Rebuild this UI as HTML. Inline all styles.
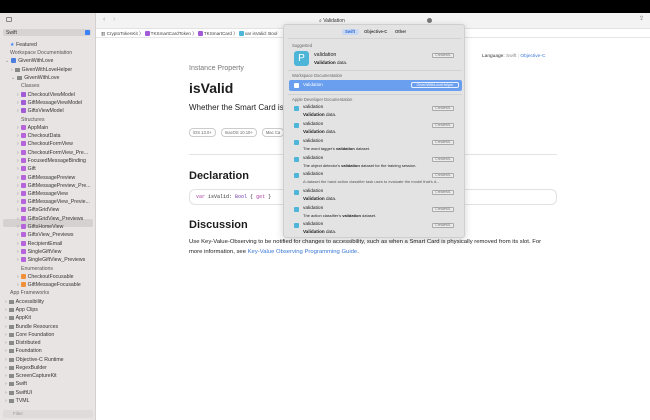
<!DOCTYPE html>
<html><head><meta charset="utf-8"><style>
*{margin:0;padding:0;box-sizing:border-box}
body{width:650px;height:420px;overflow:hidden;position:relative;font-family:"Liberation Sans",sans-serif;background:#fff;color:#222}
.a{position:absolute;white-space:nowrap}
#top{left:0;top:0;width:650px;height:13px;background:#000}
#side{left:0;top:13px;width:96px;height:407px;background:#e9e4e4;border-right:1px solid #d5d0d0}
.r{position:absolute;font-size:5.2px;color:#333;white-space:nowrap;line-height:7px}
.ic{display:inline-block;width:5px;height:5px;border-radius:1px;vertical-align:-1px;margin-right:2px}
.s{background:#b565d9}.c{background:#a25ad6}.e{background:#f0903a}.fw{background:#8a8a8a;border-radius:0;width:5px;height:4px}
.ch{color:#888;margin-right:2px;font-size:5px}
.h{color:#555}
#tb{left:96px;top:13px;width:554px;height:16px;background:#f3f3f3;border-bottom:1px solid #e2e2e2}
#bc{left:96px;top:29px;width:554px;height:9px;background:#fff;border-bottom:1px solid #e6e6e6;font-size:4.6px;color:#444;padding:2px 0 0 5px}
.pill{display:inline-block;border:1px solid #ccc;border-radius:4px;font-size:4.2px;color:#666;padding:1px 3px;margin-right:5px}
#pop{left:283px;top:24px;width:182px;height:214px;background:#e3e3e3;border:1px solid #cfcfcf;border-radius:3px;box-shadow:0 2px 8px rgba(0,0,0,.18)}
.pi{position:absolute;left:10px;font-size:4.6px;color:#222;white-space:nowrap}
.t{font-size:4.8px}
.pi b{font-weight:bold}
.pic{position:absolute;left:10px;width:5px;height:5px;background:#4db5d8;border-radius:1px}
.cm{position:absolute;left:148px;width:22px;height:5px;border:1px solid #aaa;border-radius:1px;font-size:3.6px;color:#777;text-align:center;line-height:3.5px;background:#ececec}
.sec{position:absolute;left:8px;font-size:4.2px;color:#666}
</style></head><body>
<div class="a" id="top"></div>
<div class="a" id="side">
<div class="a" style="left:6px;top:4px;width:6px;height:5px;border:1px solid #888;border-radius:1px"></div>
<div class="a" style="left:3px;top:16px;width:88px;height:7px;background:#d8d3d3;border-radius:2px;font-size:5px;padding:1px 3px;color:#333">Swift<span style="position:absolute;right:1px;top:1px;width:5px;height:5px;background:#3b82f6;border-radius:1px"></span></div>
</div>
<div class="a" style="left:3px;top:219px;width:90px;height:8px;background:#d6d1d1;border-radius:2px"></div>
<div class="a" style="left:3px;top:410px;width:90px;height:8px;background:#e0dbdb;border-radius:2px;font-size:4.5px;color:#999;padding:1px 10px">Filter</div>
<div id="sb">
<div class="r" style="left:10px;top:42px"><span style="color:#3b82f6">★</span> Featured</div>
<div class="r h" style="left:10px;top:50px">Workspace Documentation</div>
<div class="r" style="left:5px;top:58px"><span class="ch">⌄</span><span class="ic" style="background:#4a7fe0"></span>GivenWithLove</div>
<div class="r" style="left:11px;top:67px"><span class="ch">›</span><span class="ic fw"></span>GivenWithLoveHelper</div>
<div class="r" style="left:11px;top:75px"><span class="ch">⌄</span><span class="ic fw"></span>GivenWithLove</div>
<div class="r h" style="left:21px;top:83px">Classes</div>
<div class="r" style="left:17px;top:92px"><span class="ch">›</span><span class="ic c"></span>CheckoutViewModel</div>
<div class="r" style="left:17px;top:100px"><span class="ch">›</span><span class="ic c"></span>GiftMessageViewModel</div>
<div class="r" style="left:17px;top:108px"><span class="ch">›</span><span class="ic c"></span>GiftsViewModel</div>
<div class="r h" style="left:21px;top:117px">Structures</div>
<div class="r" style="left:17px;top:125px"><span class="ch">›</span><span class="ic s"></span>AppMain</div>
<div class="r" style="left:17px;top:133px"><span class="ch">›</span><span class="ic s"></span>CheckoutData</div>
<div class="r" style="left:17px;top:141px"><span class="ch">›</span><span class="ic s"></span>CheckoutFormView</div>
<div class="r" style="left:17px;top:150px"><span class="ch">›</span><span class="ic s"></span>CheckoutFormView_Pre...</div>
<div class="r" style="left:17px;top:158px"><span class="ch">›</span><span class="ic s"></span>FocusedMessageBinding</div>
<div class="r" style="left:17px;top:166px"><span class="ch">›</span><span class="ic s"></span>Gift</div>
<div class="r" style="left:17px;top:175px"><span class="ch">›</span><span class="ic s"></span>GiftMessagePreview</div>
<div class="r" style="left:17px;top:183px"><span class="ch">›</span><span class="ic s"></span>GiftMessagePreview_Pre...</div>
<div class="r" style="left:17px;top:191px"><span class="ch">›</span><span class="ic s"></span>GiftMessageView</div>
<div class="r" style="left:17px;top:199px"><span class="ch">›</span><span class="ic s"></span>GiftMessageView_Previe...</div>
<div class="r" style="left:17px;top:207px"><span class="ch">›</span><span class="ic s"></span>GiftsGridView</div>
<div class="r" style="left:17px;top:216px"><span class="ch">›</span><span class="ic s"></span>GiftsGridView_Previews</div>
<div class="r" style="left:17px;top:224px"><span class="ch">›</span><span class="ic s"></span>GiftsHomeView</div>
<div class="r" style="left:17px;top:232px"><span class="ch">›</span><span class="ic s"></span>GiftsView_Previews</div>
<div class="r" style="left:17px;top:241px"><span class="ch">›</span><span class="ic s"></span>RecipientEmail</div>
<div class="r" style="left:17px;top:249px"><span class="ch">›</span><span class="ic s"></span>SingleGiftView</div>
<div class="r" style="left:17px;top:257px"><span class="ch">›</span><span class="ic s"></span>SingleGiftView_Previews</div>
<div class="r h" style="left:21px;top:266px">Enumerations</div>
<div class="r" style="left:17px;top:274px"><span class="ch">›</span><span class="ic e"></span>CheckoutFocusable</div>
<div class="r" style="left:17px;top:282px"><span class="ch">›</span><span class="ic e"></span>GiftMessageFocusable</div>
<div class="r h" style="left:10px;top:290px">App Frameworks</div>
<div class="r" style="left:5px;top:299px"><span class="ch">›</span><span class="ic fw"></span>Accessibility</div>
<div class="r" style="left:5px;top:307px"><span class="ch">›</span><span class="ic fw"></span>App Clips</div>
<div class="r" style="left:5px;top:315px"><span class="ch">›</span><span class="ic fw"></span>AppKit</div>
<div class="r" style="left:5px;top:324px"><span class="ch">›</span><span class="ic fw"></span>Bundle Resources</div>
<div class="r" style="left:5px;top:332px"><span class="ch">›</span><span class="ic fw"></span>Core Foundation</div>
<div class="r" style="left:5px;top:340px"><span class="ch">›</span><span class="ic fw"></span>Distributed</div>
<div class="r" style="left:5px;top:348px"><span class="ch">›</span><span class="ic fw"></span>Foundation</div>
<div class="r" style="left:5px;top:357px"><span class="ch">›</span><span class="ic fw"></span>Objective-C Runtime</div>
<div class="r" style="left:5px;top:365px"><span class="ch">›</span><span class="ic fw"></span>RegexBuilder</div>
<div class="r" style="left:5px;top:373px"><span class="ch">›</span><span class="ic fw"></span>ScreenCaptureKit</div>
<div class="r" style="left:5px;top:381px"><span class="ch">›</span><span class="ic fw"></span>Swift</div>
<div class="r" style="left:5px;top:390px"><span class="ch">›</span><span class="ic fw"></span>SwiftUI</div>
<div class="r" style="left:5px;top:398px"><span class="ch">›</span><span class="ic fw"></span>TVML</div>
</div>

<div class="a" id="tb"><span class="a" style="left:7px;top:3px;font-size:7px;color:#999">‹</span><span class="a" style="left:17px;top:3px;font-size:7px;color:#bbb">›</span><span class="a" style="right:6px;top:2px;font-size:6px;color:#666">⇪</span></div>
<div class="a" id="bc">▥ CryptoTokenKit 〉<span class="ic c" style="margin:0 1px"></span>TKSmartCardToken 〉<span class="ic c" style="margin:0 1px"></span>TKSmartCard 〉<span class="ic" style="background:#4db5d8;margin:0 1px"></span>var isValid: Bool</div>

<div class="a" style="left:189px;top:65px;font-size:7px;color:#777">Instance Property</div>
<div class="a" style="left:189px;top:80px;font-size:14px;font-weight:bold;color:#1d1d1f">isValid</div>
<div class="a" style="left:189px;top:103px;font-size:8px;color:#1d1d1f">Whether the Smart Card is</div>
<div class="a" style="left:189px;top:121px"><span class="pill">iOS 13.0+</span><span class="pill">macOS 10.10+</span><span class="pill">Mac Ca</span></div>
<div class="a" style="left:482px;top:54px;font-size:4.8px;color:#333">Language: <span style="color:#888">Swift</span> <span style="color:#ccc">|</span> <span style="color:#3a78d6">Objective-C</span></div>
<div class="a" style="left:189px;top:154px;width:368px;height:1px;background:#e3e3e3"></div>
<div class="a" style="left:189px;top:170px;font-size:11px;font-weight:bold;color:#1d1d1f">Declaration</div>
<div class="a" style="left:189px;top:189px;width:368px;height:16px;border:1px solid #e2e2e2;border-radius:6px;font-family:'Liberation Mono',monospace;font-size:5px;padding:4px 6px;color:#333"><span style="color:#ad3da4">var</span> isValid: <span style="color:#703daa">Bool</span> { <span style="color:#ad3da4">get</span> }</div>
<div class="a" style="left:189px;top:219px;font-size:11px;font-weight:bold;color:#1d1d1f">Discussion</div>
<div class="a" style="left:189px;top:238px;font-size:5.9px;color:#222;line-height:9.5px">Use Key-Value-Observing to be notified for changes to accessibility, such as when a Smart Card is physically removed from its slot. For<br>more information, see <span style="color:#3a78d6">Key-Value Observing Programming Guide</span>.</div>

<div class="a" style="left:313px;top:16px;width:122px;height:9px;font-size:5px;color:#333;padding:2px 6px">⌕ Validation<span style="position:absolute;right:3px;top:2px;width:5px;height:5px;border-radius:50%;background:#777"></span></div>

<div class="a" id="pop">
<div class="a" style="left:58px;top:4px;width:17px;height:6px;background:#c9d9f3;border-radius:2px"></div>
<div class="a" style="left:61px;top:4px;font-size:4.2px;color:#2f6bd2;font-weight:bold">Swift</div>
<div class="a" style="left:80px;top:4px;font-size:4.2px;color:#444;font-weight:bold">Objective-C</div>
<div class="a" style="left:111px;top:4px;font-size:4.2px;color:#444;font-weight:bold">Other</div>
<div class="a" style="left:4px;top:13px;width:174px;height:1px;background:#d2d2d2"></div>
<div class="sec" style="top:18px">Suggested</div>
<div class="a" style="left:10px;top:26px;width:15px;height:15px;background:#4db5d8;border-radius:3px;color:#fff;font-size:10px;text-align:center;line-height:15px">P</div>
<div class="pi" style="left:30px;top:27px;font-size:5.3px">validation</div>
<div class="pi" style="left:30px;top:35px"><b>Validation</b> data.</div>
<div class="cm" style="top:28px">CreateML</div>
<div class="a" style="left:4px;top:45px;width:174px;height:1px;background:#d2d2d2"></div>
<div class="sec" style="top:48px">Workspace Documentation</div>
<div class="a" style="left:5px;top:55px;width:173px;height:11px;background:#6a9ff0;border-radius:2px"></div>
<div class="a" style="left:10px;top:58px;width:5px;height:5px;background:#fff;border-radius:1px"></div>
<div class="pi" style="left:19px;top:57px;color:#fff">Validation</div>
<div class="a" style="left:127px;top:57px;width:48px;height:6px;border:1px solid #e8f0ff;border-radius:2px;font-size:3.8px;color:#fff;text-align:center;line-height:4px">GivenWithLoveHelper</div>
<div class="a" style="left:4px;top:69px;width:174px;height:1px;background:#d2d2d2"></div>
<div class="sec" style="top:72px">Apple Developer Documentation</div>
<div class="pic" style="top:81px"></div><div class="pi t" style="left:19px;top:80px">validation</div><div class="pi" style="left:19px;top:87px"><b>Validation</b> data.</div><div class="cm" style="top:81px">CreateML</div>
<div class="pic" style="top:98px"></div><div class="pi t" style="left:19px;top:97px">validation</div><div class="pi" style="left:19px;top:104px"><b>Validation</b> data.</div><div class="cm" style="top:98px">CreateML</div>
<div class="pic" style="top:115px"></div><div class="pi t" style="left:19px;top:114px">validation</div><div class="pi" style="left:19px;top:121px;font-size:4px">The word tagger's <b>validation</b> dataset.</div><div class="cm" style="top:115px">CreateML</div>
<div class="pic" style="top:132px"></div><div class="pi t" style="left:19px;top:131px">validation</div><div class="pi" style="left:19px;top:138px;font-size:4px">The object detector's <b>validation</b> dataset for the training session.</div><div class="cm" style="top:132px">CreateML</div>
<div class="pic" style="top:148px"></div><div class="pi t" style="left:19px;top:147px">validation</div><div class="pi" style="left:19px;top:154px;font-size:4px;color:#555">A dataset the hand action classifier task uses to evaluate the model that's d...</div><div class="cm" style="top:148px">CreateML</div>
<div class="pic" style="top:165px"></div><div class="pi t" style="left:19px;top:164px">validation</div><div class="pi" style="left:19px;top:171px"><b>Validation</b> data.</div><div class="cm" style="top:165px">CreateML</div>
<div class="pic" style="top:182px"></div><div class="pi t" style="left:19px;top:181px">validation</div><div class="pi" style="left:19px;top:188px;font-size:4px">The action classifier's <b>validation</b> dataset.</div><div class="cm" style="top:182px">CreateML</div>
<div class="pic" style="top:198px"></div><div class="pi t" style="left:19px;top:197px">validation</div><div class="pi" style="left:19px;top:204px"><b>Validation</b> data.</div><div class="cm" style="top:198px">CreateML</div>
</div>
</body></html>
